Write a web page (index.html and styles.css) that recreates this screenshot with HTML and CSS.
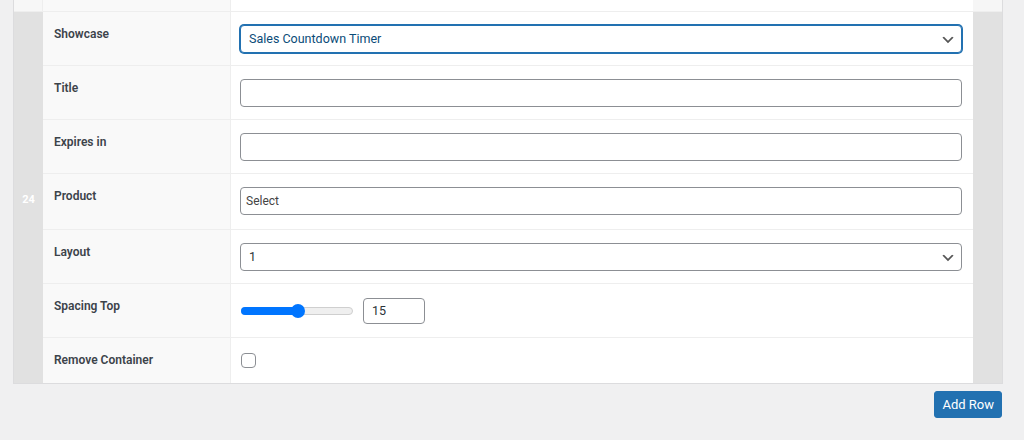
FILE: index.html
```html
<!DOCTYPE html>
<html>
<head>
<meta charset="utf-8">
<link rel="stylesheet" href="styles.css">
</head>
<body>
<div class="page">
  <div class="repeater">
    <div class="top-row">
      <div class="t-order"></div>
      <div class="t-label"></div>
      <div class="t-field"></div>
      <div class="t-remove"></div>
    </div>
    <div class="row">
      <div class="order"><span>24</span></div>
      <div class="fields">
        <div class="field">
          <div class="label">Showcase</div>
          <div class="input-cell">
            <div class="select focused">Sales Countdown Timer</div>
          </div>
        </div>
        <div class="field">
          <div class="label">Title</div>
          <div class="input-cell"><div class="text-input"></div></div>
        </div>
        <div class="field">
          <div class="label">Expires in</div>
          <div class="input-cell"><div class="text-input"></div></div>
        </div>
        <div class="field field-product">
          <div class="label">Product</div>
          <div class="input-cell"><div class="text-input select2">Select</div></div>
        </div>
        <div class="field">
          <div class="label">Layout</div>
          <div class="input-cell"><div class="select">1</div></div>
        </div>
        <div class="field">
          <div class="label">Spacing Top</div>
          <div class="input-cell range-cell">
            <div class="range">
              <div class="range-fill"></div>
              <div class="range-thumb"></div>
            </div>
            <div class="number-input">15</div>
          </div>
        </div>
        <div class="field field-last">
          <div class="label">Remove Container</div>
          <div class="input-cell"><div class="checkbox"></div></div>
        </div>
      </div>
      <div class="remove"></div>
    </div>
  </div>
  <div class="actions">
    <button class="button-primary">Add Row</button>
  </div>
</div>
</body>
</html>
```

FILE: styles.css
```css
html, body {
  margin: 0;
  padding: 0;
  background: #f0f0f1;
  font-family: Roboto, "Noto Sans", "Liberation Sans", sans-serif;
  color: #3c434a;
}

.page {
  width: 1024px;
  height: 440px;
  padding-left: 13px;
  box-sizing: border-box;
}

.repeater {
  width: 990px;
  border: 1px solid #dcdcde;
  border-top: none;
  box-sizing: border-box;
  background: #fff;
}

.top-row {
  display: grid;
  grid-template-columns: 29px 188px 742px 29px;
  height: 11px;
  border-bottom: 1px solid #eeeeee;
}
.t-order { background: #f7f7f7; border-right: 1px solid #eeeeee; }
.t-label { background: #f9f9f9; border-right: 1px solid #eeeeee; }
.t-field { background: #fff; }
.t-remove { background: #f6f6f6; }

.row {
  display: grid;
  grid-template-columns: 29px 930px 29px;
}

.order {
  background: #e1e1e1;
  display: flex;
  align-items: center;
  justify-content: center;
  color: #fff;
  font-size: 11px;
  font-weight: 700;
  padding-top: 3px;
}

.remove {
  background: #e1e1e1;
}

.fields {
  display: flex;
  flex-direction: column;
}

.field {
  display: grid;
  grid-template-columns: 188px 742px;
  border-bottom: 1px solid #eeeeee;
  min-height: 54px;
  box-sizing: border-box;
}
.field-product { min-height: 56px; }
.field-last { border-bottom: none; min-height: 45px; }

.label {
  background: #f9f9f9;
  border-right: 1px solid #eeeeee;
  padding: 13px 11px 0 11px;
  font-size: 12px;
  line-height: 18px;
  font-weight: 600;
  color: #3c434a;
}

.input-cell {
  padding: 13px 11px 12px 9px;
  display: flex;
  align-items: flex-start;
}

.select, .text-input, .number-input {
  box-sizing: border-box;
  height: 28px;
  border: 1px solid #8c8f94;
  border-radius: 4px;
  background: #fff;
  font-size: 12.5px;
  line-height: 26px;
  color: #2c3338;
}

.select, .text-input {
  width: 722px;
}

.select {
  padding-left: 8px;
  background-image: url("data:image/svg+xml;charset=utf8,%3Csvg xmlns='http://www.w3.org/2000/svg' width='20' height='20' viewBox='0 0 20 20'%3E%3Cpath d='M5 6l5 5 5-5 2 1-7 7-7-7z' fill='%23555'/%3E%3C/svg%3E");
  background-repeat: no-repeat;
  background-size: 16px 16px;
  background-position: right 5px top 55%;
}

.select.focused {
  border-color: #2271b1;
  box-shadow: 0 0 0 1px #2271b1;
  color: #0a4b78;
}

.select2 {
  padding-left: 5px;
  font-size: 12px;
  color: #444;
}

.range-cell {
  align-items: center;
  padding-top: 12px;
}

.range {
  position: relative;
  width: 112px;
  height: 8px;
  margin-left: 1px;
  margin-right: 10px;
  background: #efefef;
  border: 1px solid #cfcfcf;
  border-radius: 5px;
  box-sizing: border-box;
}
.range-fill {
  position: absolute;
  left: -1px;
  top: -1px;
  width: 58px;
  height: 8px;
  background: #0075ff;
  border-radius: 5px;
}
.range-thumb {
  position: absolute;
  left: 49px;
  top: -4px;
  width: 14px;
  height: 14px;
  border-radius: 50%;
  background: #0075ff;
}

.number-input {
  width: 62px;
  height: 26px;
  line-height: 24px;
  padding-left: 8px;
  font-size: 12.5px;
}

.checkbox {
  width: 15px;
  height: 15px;
  box-sizing: border-box;
  border: 1px solid #8c8f94;
  border-radius: 4px;
  background: #fff;
  margin-top: 2px;
  margin-left: 1px;
}

.actions {
  width: 990px;
  display: flex;
  justify-content: flex-end;
  padding-top: 7px;
}

.button-primary {
  background: #2271b1;
  border: 1px solid #2271b1;
  color: #fff;
  border-radius: 3px;
  font-family: Roboto, "Noto Sans", "Liberation Sans", sans-serif;
  font-size: 13px;
  height: 27px;
  padding: 0 7px;
  margin-right: 1px;
  cursor: pointer;
}
```
